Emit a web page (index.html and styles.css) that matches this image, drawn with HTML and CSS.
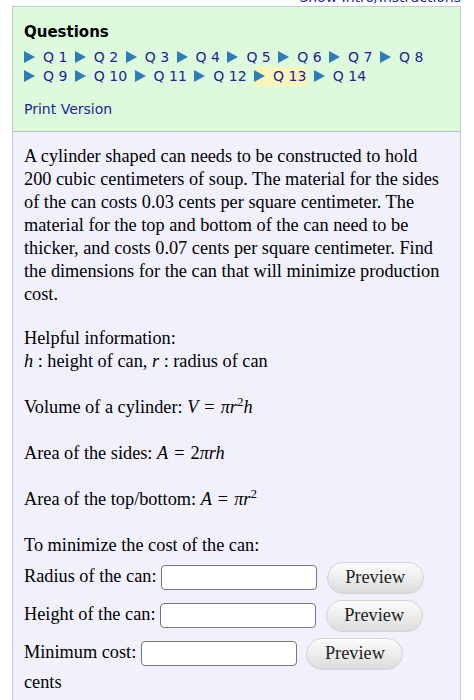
FILE: index.html
```html
<!DOCTYPE html>
<html lang="en">
<head>
    <meta charset="UTF-8">
    <meta name="viewport" content="width=device-width, initial-scale=1.0">
    <title>Question 13</title>
    <link rel="stylesheet" href="styles.css">
</head>
<body>

    <div class="intro"><a href="#">Show Intro/Instructions</a></div>

    <div class="panel">
        <!-- Question navigation -->
        <div class="nav">
            <h3>Questions</h3>
            <ul class="qlist">
                <li><span class="tri"></span><a href="#">Q 1</a></li>
                <li><span class="tri"></span><a href="#">Q 2</a></li>
                <li><span class="tri"></span><a href="#">Q 3</a></li>
                <li><span class="tri"></span><a href="#">Q 4</a></li>
                <li><span class="tri"></span><a href="#">Q 5</a></li>
                <li><span class="tri"></span><a href="#">Q 6</a></li>
                <li><span class="tri"></span><a href="#">Q 7</a></li>
                <li><span class="tri"></span><a href="#">Q 8</a></li>
                <li><span class="tri"></span><a href="#">Q 9</a></li>
                <li><span class="tri"></span><a href="#">Q 10</a></li>
                <li><span class="tri"></span><a href="#">Q 11</a></li>
                <li><span class="tri"></span><a href="#">Q 12</a></li>
                <li class="current"><span class="tri"></span><a href="#">Q 13</a></li>
                <li><span class="tri"></span><a href="#">Q 14</a></li>
            </ul>
            <a class="print" href="#">Print Version</a>
        </div>

        <!-- Problem text -->
        <div class="problem">
            <p class="intro-text">A cylinder shaped can needs to be constructed to hold 200 cubic centimeters of soup. The material for the sides of the can costs 0.03 cents per square centimeter. The material for the top and bottom of the can need to be thicker, and costs 0.07 cents per square centimeter. Find the dimensions for the can that will minimize production cost.</p>

            <p>Helpful information:<br>
            <i>h</i> : height of can, <i>r</i> : radius of can</p>

            <p>Volume of a cylinder: <span class="math"><i>V</i><span class="eq">=</span><i>&pi;r</i><sup>2</sup><i>h</i></span></p>

            <p>Area of the sides: <span class="math"><i>A</i><span class="eq">=</span>2<i>&pi;rh</i></span></p>

            <p>Area of the top/bottom: <span class="math"><i>A</i><span class="eq">=</span><i>&pi;r</i><sup>2</sup></span></p>

            <p class="answers">To minimize the cost of the can:
                <span class="row">Radius of the can: <input type="text"> <button type="button">Preview</button></span>
                <span class="row">Height of the can: <input type="text"> <button type="button">Preview</button></span>
                <span class="row">Minimum cost: <input type="text"> <button type="button">Preview</button></span>
                cents
            </p>
        </div>
    </div>

</body>
</html>
```

FILE: styles.css
```css
/* Page */
body {
    margin: 0;
    background: white;
    font-family: "DejaVu Sans", Verdana, sans-serif;
}

a {
    color: #22229a;
    text-decoration: none;
}

/* Cut-off link at the very top */
.intro {
    text-align: right;
    margin: -11px 13px 0 0;
    font-size: 14px;
    line-height: 17px;
}

/* Outer panel */
.panel {
    margin: 0 13px 0 12px;
    border: 1px solid #c7c7da;
}

/* Question navigation */
.nav {
    background: #ddfadd;
    padding: 15px 11px 12px 11px;
    border-bottom: 1px solid #bcbcd0;
}

.nav h3 {
    margin: 0;
    font-size: 15px;
    line-height: 20px;
    font-weight: bold;
}

.qlist {
    list-style: none;
    margin: 6px 0 0 0;
    padding: 0;
    font-size: 14px;
    line-height: 19px;
}

.qlist li {
    display: inline-block;
    margin-right: 2px;
    padding-right: 1px;
}

.qlist li.current {
    background: #fbf6b8;
}

.tri {
    display: inline-block;
    width: 0;
    height: 0;
    border-top: 6px solid transparent;
    border-bottom: 6px solid transparent;
    border-left: 11px solid #2e7db6;
    margin-right: 8px;
    vertical-align: -1px;
}

.print {
    display: block;
    margin-top: 14px;
    font-size: 14px;
    line-height: 19px;
}

/* Problem area */
.problem {
    background: #f1f1fe;
    padding: 13px 11px 30px 11px;
    font-family: "Liberation Serif", "Times New Roman", serif;
    font-size: 18.3px;
    line-height: 23px;
}

.problem p {
    margin: 0 0 23px 0;
}

.problem p.intro-text {
    margin-bottom: 21px;
}

.math i {
    font-style: italic;
}

.math .eq {
    margin: 0 6px;
}

.math sup {
    font-size: 13px;
    line-height: 0;
}

.answers {
    margin-bottom: 0;
}

.row {
    display: block;
    line-height: 38px;
}

input {
    width: 150px;
    height: 23px;
    padding: 0 2px;
    border: 1px solid #777;
    border-radius: 4px;
    background: white;
    vertical-align: middle;
    box-sizing: content-box;
}

button {
    width: 97px;
    height: 32px;
    margin-left: 5px;
    font-family: "Liberation Serif", "Times New Roman", serif;
    font-size: 18.3px;
    color: #222;
    border: 1px solid #d4d4d4;
    border-radius: 16px;
    background: linear-gradient(#fdfdfd, #dcdcdc);
    vertical-align: middle;
}
```
